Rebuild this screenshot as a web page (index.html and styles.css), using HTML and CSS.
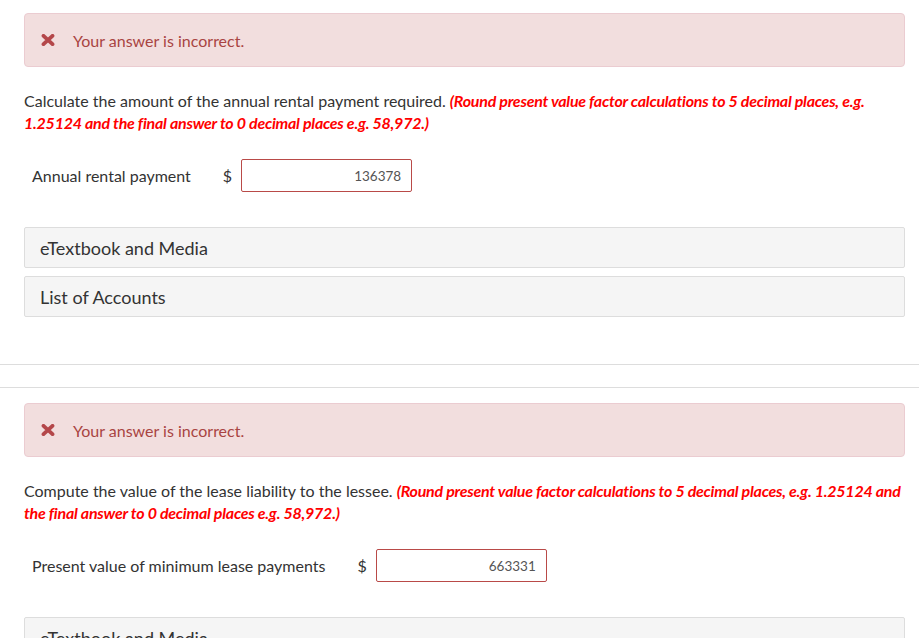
FILE: index.html
```html
<!DOCTYPE html>
<html lang="en">
<head>
  <meta charset="UTF-8">
  <meta name="viewport" content="width=device-width, initial-scale=1.0">
  <title>Question</title>
  <link rel="stylesheet" href="styles.css">
</head>
<body>
  <div class="question">
    <div class="alert">
      <svg class="alert-icon" width="14" height="12" viewBox="0 0 14 12">
        <path d="M2.5 1.8 L11.5 10.2 M11.5 1.8 L2.5 10.2" stroke="#b4474a" stroke-width="3.8" stroke-linecap="round"/>
      </svg>
      <span>Your answer is incorrect.</span>
    </div>
    <p class="prompt">Calculate the amount of the annual rental payment required. <strong class="hint">(Round present value factor calculations to 5 decimal places, e.g. 1.25124 and the final answer to 0 decimal places e.g. 58,972.)</strong></p>
    <div class="answer-row">
      <label for="ans1">Annual rental payment</label>
      <span class="currency">$</span>
      <input type="text" id="ans1" class="answer-input" value="136378">
    </div>
    <div class="panel">eTextbook and Media</div>
    <div class="panel">List of Accounts</div>
  </div>

  <hr class="divider">
  <hr class="divider divider-second">

  <div class="question">
    <div class="alert">
      <svg class="alert-icon" width="14" height="12" viewBox="0 0 14 12">
        <path d="M2.5 1.8 L11.5 10.2 M11.5 1.8 L2.5 10.2" stroke="#b4474a" stroke-width="3.8" stroke-linecap="round"/>
      </svg>
      <span>Your answer is incorrect.</span>
    </div>
    <p class="prompt">Compute the value of the lease liability to the lessee. <strong class="hint">(Round present value factor calculations to 5 decimal places, e.g. 1.25124 and the final answer to 0 decimal places e.g. 58,972.)</strong></p>
    <div class="answer-row">
      <label for="ans2">Present value of minimum lease payments</label>
      <span class="currency">$</span>
      <input type="text" id="ans2" class="answer-input" value="663331">
    </div>
    <div class="panel">eTextbook and Media</div>
    <div class="panel">List of Accounts</div>
  </div>
</body>
</html>
```

FILE: styles.css
```css
body {
  margin: 0;
  font-family: Lato, "Open Sans", sans-serif;
  color: #333;
  background-color: #fff;
  overflow: hidden;
}

.question {
  padding: 13px 14px 0 24px;
}

.alert {
  display: flex;
  align-items: center;
  height: 52px;
  padding: 0 16px;
  background-color: #f2dede;
  border: 1px solid #ebccd1;
  border-radius: 4px;
  color: #a94442;
  font-size: 16px;
}

.alert-icon {
  margin-right: 18px;
}

.prompt {
  margin: 23px 0 0;
  font-size: 16px;
  line-height: 22px;
}

.hint {
  color: #f00;
  font-style: italic;
  font-weight: bold;
  letter-spacing: -0.25px;
}

.answer-row {
  display: flex;
  align-items: center;
  margin-top: 25px;
  padding-left: 8px;
  font-size: 16px;
}

.currency {
  margin-left: 32px;
  margin-right: 9px;
}

.answer-input {
  width: 171px;
  height: 33px;
  box-sizing: border-box;
  padding: 0 10px;
  border: 1px solid #b94a48;
  border-radius: 2px;
  font-family: Lato, sans-serif;
  font-size: 13.5px;
  color: #555;
  text-align: right;
}

.panel {
  height: 39px;
  margin-top: 8px;
  padding: 0 15px;
  display: flex;
  align-items: center;
  background-color: #f5f5f5;
  border: 1px solid #ddd;
  border-radius: 2px;
  font-size: 18px;
}

.answer-row + .panel {
  margin-top: 35px;
}

.divider {
  margin: 47px 0 0;
  border: none;
  border-top: 1px solid #ddd;
}

.divider-second {
  margin-top: 22px;
}

.divider-second + .question {
  padding-top: 15px;
}
```
